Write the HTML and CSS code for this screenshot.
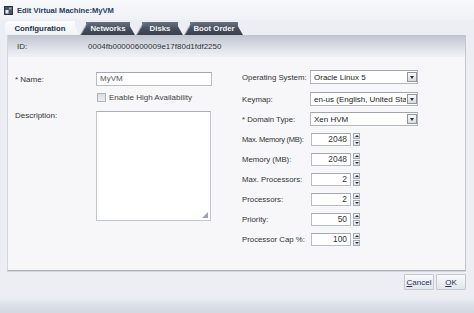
FILE: index.html
```html
<!DOCTYPE html>
<html>
<head>
<meta charset="utf-8">
<link rel="stylesheet" href="styles.css">
</head>
<body>
<div class="titlebar">
  <svg class="ticon" width="9" height="9" viewBox="0 0 9 9"><rect x="0.5" y="0.5" width="8" height="8" fill="#4a5466" stroke="#2c3442"/><rect x="1.5" y="4" width="3" height="3.5" fill="#e8ebf0"/><rect x="5" y="1.5" width="2.5" height="2" fill="#9aa3b3"/></svg>
  <span class="title">Edit Virtual Machine:MyVM</span>
</div>
<div class="tabs">
  <div class="tab active">Configuration</div>
  <div class="tab dark t1">Networks</div>
  <div class="tab dark t2">Disks</div>
  <div class="tab dark t3">Boot Order</div>
</div>
<div class="panel">
  <div class="idrow"><span class="idlabel">ID:</span><span>0004fb00000600009e17f80d1fdf2250</span></div>
  <div class="form">
    <div class="left">
      <div class="lrow name"><span class="lbl">* Name:</span><div class="input">MyVM</div></div>
      <div class="lrow chk"><span class="lbl"></span><span class="box"></span><span class="chklbl">Enable High Availability</span></div>
      <div class="lrow desc"><span class="lbl">Description:</span><div class="textarea"><span class="grip"></span></div></div>
    </div>
    <div class="right">
      <div class="rrow s1"><span class="rlbl">Operating System:</span><div class="select"><span class="stext">Oracle Linux 5</span><span class="dd"><span class="tri"></span></span></div></div>
      <div class="rrow s2"><span class="rlbl">Keymap:</span><div class="select"><span class="stext">en-us (English, United Stat</span><span class="dd"><span class="tri"></span></span></div></div>
      <div class="rrow s3"><span class="rlbl">* Domain Type:</span><div class="select"><span class="stext">Xen HVM</span><span class="dd"><span class="tri"></span></span></div></div>
      <div class="rrow num"><span class="rlbl tight">Max. Memory (MB):</span><div class="ninput">2048</div><span class="spin"><span class="up"></span><span class="down"></span></span></div>
      <div class="rrow num"><span class="rlbl">Memory (MB):</span><div class="ninput">2048</div><span class="spin"><span class="up"></span><span class="down"></span></span></div>
      <div class="rrow num"><span class="rlbl">Max. Processors:</span><div class="ninput">2</div><span class="spin"><span class="up"></span><span class="down"></span></span></div>
      <div class="rrow num"><span class="rlbl">Processors:</span><div class="ninput">2</div><span class="spin"><span class="up"></span><span class="down"></span></span></div>
      <div class="rrow num"><span class="rlbl">Priority:</span><div class="ninput">50</div><span class="spin"><span class="up"></span><span class="down"></span></span></div>
      <div class="rrow num"><span class="rlbl">Processor Cap %:</span><div class="ninput">100</div><span class="spin"><span class="up"></span><span class="down"></span></span></div>
    </div>
  </div>
</div>
<div class="footer">
  <div class="btn"><u>C</u>ancel</div>
  <div class="btn"><u>O</u>K</div>
</div>
</body>
</html>
```
FILE: styles.css
```css
body {
  margin: 0;
  width: 474px;
  height: 313px;
  overflow: hidden;
  background: #eceef4;
  font-family: "Liberation Sans", Arial, sans-serif;
  font-size: 8px;
  color: #333;
}
.titlebar {
  height: 20px;
  display: flex;
  align-items: center;
  gap: 4px;
  padding-left: 4px;
  background: linear-gradient(#f8f9fb, #eff1f6);
}
.title {
  font-weight: bold;
  font-size: 7.6px;
  color: #2a3b5a;
}
.tabs {
  height: 15px;
  display: flex;
  align-items: flex-end;
  padding-left: 5px;
}
.tab {
  height: 13px;
  display: flex;
  align-items: center;
  justify-content: center;
  font-weight: bold;
  font-size: 7.8px;
  position: relative;
}
.tab.active {
  width: 70px;
  height: 14px;
  color: #243247;
  background: linear-gradient(#fbfcfd, #f0f2f6);
  border-top-left-radius: 4px;
  z-index: 5;
}
.tab.active::after {
  content: "";
  position: absolute;
  right: -5px;
  top: 0;
  bottom: 0;
  width: 10px;
  background: linear-gradient(#fbfcfd, #f0f2f6);
  transform-origin: bottom;
  transform: skewX(30deg);
  border-top-right-radius: 4px;
  z-index: -1;
}
.tab.dark {
  color: #f2f4f7;
  background: linear-gradient(#6a7180, #434a58 60%, #3a404d);
}
.tab.dark::before,
.tab.dark::after {
  content: "";
  position: absolute;
  top: 0;
  bottom: 0;
  width: 10px;
  background: linear-gradient(#6a7180, #434a58 60%, #3a404d);
  transform-origin: bottom;
  z-index: -1;
}
.tab.dark::before {
  left: -5px;
  transform: skewX(-30deg);
  border-top-left-radius: 4px;
  box-shadow: -1px 0 0 #8a909c;
}
.tab.dark::after {
  right: -5px;
  transform: skewX(30deg);
  border-top-right-radius: 4px;
}
.tab.t1 { width: 44px; margin-left: 11px; z-index: 2; }
.tab.t2 { width: 36px; margin-left: 12px; z-index: 3; }
.tab.t3 { width: 48px; margin-left: 12px; z-index: 4; }
.panel {
  margin-left: 7px;
  width: 457px;
  height: 235px;
  border-left: 1px solid #d3d6de;
  border-right: 1px solid #c2c6cf;
  border-bottom: 1px solid #a9aeb8;
  background: #f7f7fa;
  box-shadow: 0 1px 0 #d4d7de;
}
.idrow {
  height: 22px;
  display: flex;
  align-items: center;
  padding-left: 9px;
  background: linear-gradient(#c0c4cf, #dcdfe7 55%, #f1f2f6);
}
.idlabel { width: 71px; }
.form { display: flex; }
.left {
  width: 227px;
  padding-left: 7px;
  padding-top: 15px;
}
.lrow { display: flex; }
.lbl { width: 81px; flex: none; }
.name { height: 14px; align-items: center; }
.input {
  width: 111px;
  height: 12px;
  border: 1px solid #b8bcc4;
  border-top-color: #a2a7b0;
  background: #fff;
  padding-left: 3px;
  line-height: 12px;
  color: #555;
}
.chk { margin-top: 6px; height: 10px; align-items: center; }
.box {
  width: 7px;
  height: 7px;
  margin-left: 1px;
  border: 1px solid #aeb2ba;
  background: linear-gradient(#d9dce2, #eceef2);
}
.chklbl { margin-left: 3px; color: #444; }
.desc { margin-top: 9px; }
.desc .lbl { line-height: 9px; }
.textarea {
  width: 113px;
  height: 108px;
  border: 1px solid #c3c7ce;
  border-top-color: #a9aeb7;
  background: #fff;
  position: relative;
}
.grip {
  position: absolute;
  right: 2px;
  bottom: 2px;
  width: 6px;
  height: 6px;
  background: radial-gradient(circle, #9aa0a8 0.7px, transparent 0.9px) 0 0 / 2px 2px;
  clip-path: polygon(100% 0, 100% 100%, 0 100%);
}
.right { padding-top: 13px; }
.rrow { display: flex; align-items: center; }
.rlbl { width: 68px; flex: none; white-space: nowrap; font-size: 7.8px; }
.rlbl.tight { letter-spacing: -0.3px; font-size: 7.6px; }
.s1 { margin-bottom: 8px; }
.s2 { margin-bottom: 6px; }
.s3 { margin-bottom: 7px; }
.num { margin-bottom: 7px; height: 13px; }
.select {
  width: 106px;
  height: 12px;
  border: 1px solid #b3b7bf;
  border-top-color: #a0a5ae;
  background: #fff;
  position: relative;
  display: flex;
  align-items: center;
}
.stext {
  padding-left: 3px;
  white-space: nowrap;
  color: #222;
  font-size: 8px;
}
.dd {
  position: absolute;
  right: 0;
  top: 0;
  width: 11px;
  height: 12px;
  background: #fff;
  display: flex;
  align-items: center;
  justify-content: center;
}
.dd::before {
  content: "";
  position: absolute;
  left: 1px;
  top: 1px;
  width: 8px;
  height: 8px;
  border: 1px solid #8f949d;
  background: linear-gradient(#fafafa, #d8dbe0);
}
.tri {
  position: relative;
  width: 0;
  height: 0;
  border-left: 2.5px solid transparent;
  border-right: 2.5px solid transparent;
  border-top: 3px solid #2a2f38;
  margin-top: 1px;
}
.ninput {
  width: 35px;
  height: 11px;
  margin-left: 1px;
  border: 1px solid #b8bcc4;
  border-top-color: #a4a9b2;
  background: #fff;
  text-align: right;
  padding-right: 3px;
  line-height: 11px;
  font-size: 8.4px;
  color: #333;
}
.spin {
  width: 7px;
  height: 13px;
  margin-left: 2px;
  display: flex;
  flex-direction: column;
  gap: 1px;
}
.spin span {
  flex: 1;
  border: 1px solid #a4a9b2;
  background: linear-gradient(#f6f7f9, #d9dce2);
  position: relative;
}
.spin .up::after,
.spin .down::after {
  content: "";
  position: absolute;
  left: 0.5px;
  width: 0;
  height: 0;
  border-left: 2px solid transparent;
  border-right: 2px solid transparent;
}
.spin .up::after { top: 1px; border-bottom: 2.5px solid #2a2f38; }
.spin .down::after { top: 1px; border-top: 2.5px solid #2a2f38; }
.footer {
  height: 41px;
  margin-top: 1px;
  display: flex;
  justify-content: flex-end;
  align-items: flex-start;
  gap: 2px;
  padding-right: 8px;
  padding-top: 2px;
  box-sizing: border-box;
  background: linear-gradient(#eceef4 0, #eceef4 26px, #dde1ea 32px, #d3d8e2 100%);
}
.btn {
  width: 28px;
  height: 14px;
  border: 1px solid #c4c8d0;
  border-radius: 1px;
  background: linear-gradient(#f9fafc, #e2e5ec);
  display: flex;
  align-items: center;
  justify-content: center;
  color: #1f3050;
  font-size: 8px;
}
.btn u { text-underline-offset: 1px; }
```
